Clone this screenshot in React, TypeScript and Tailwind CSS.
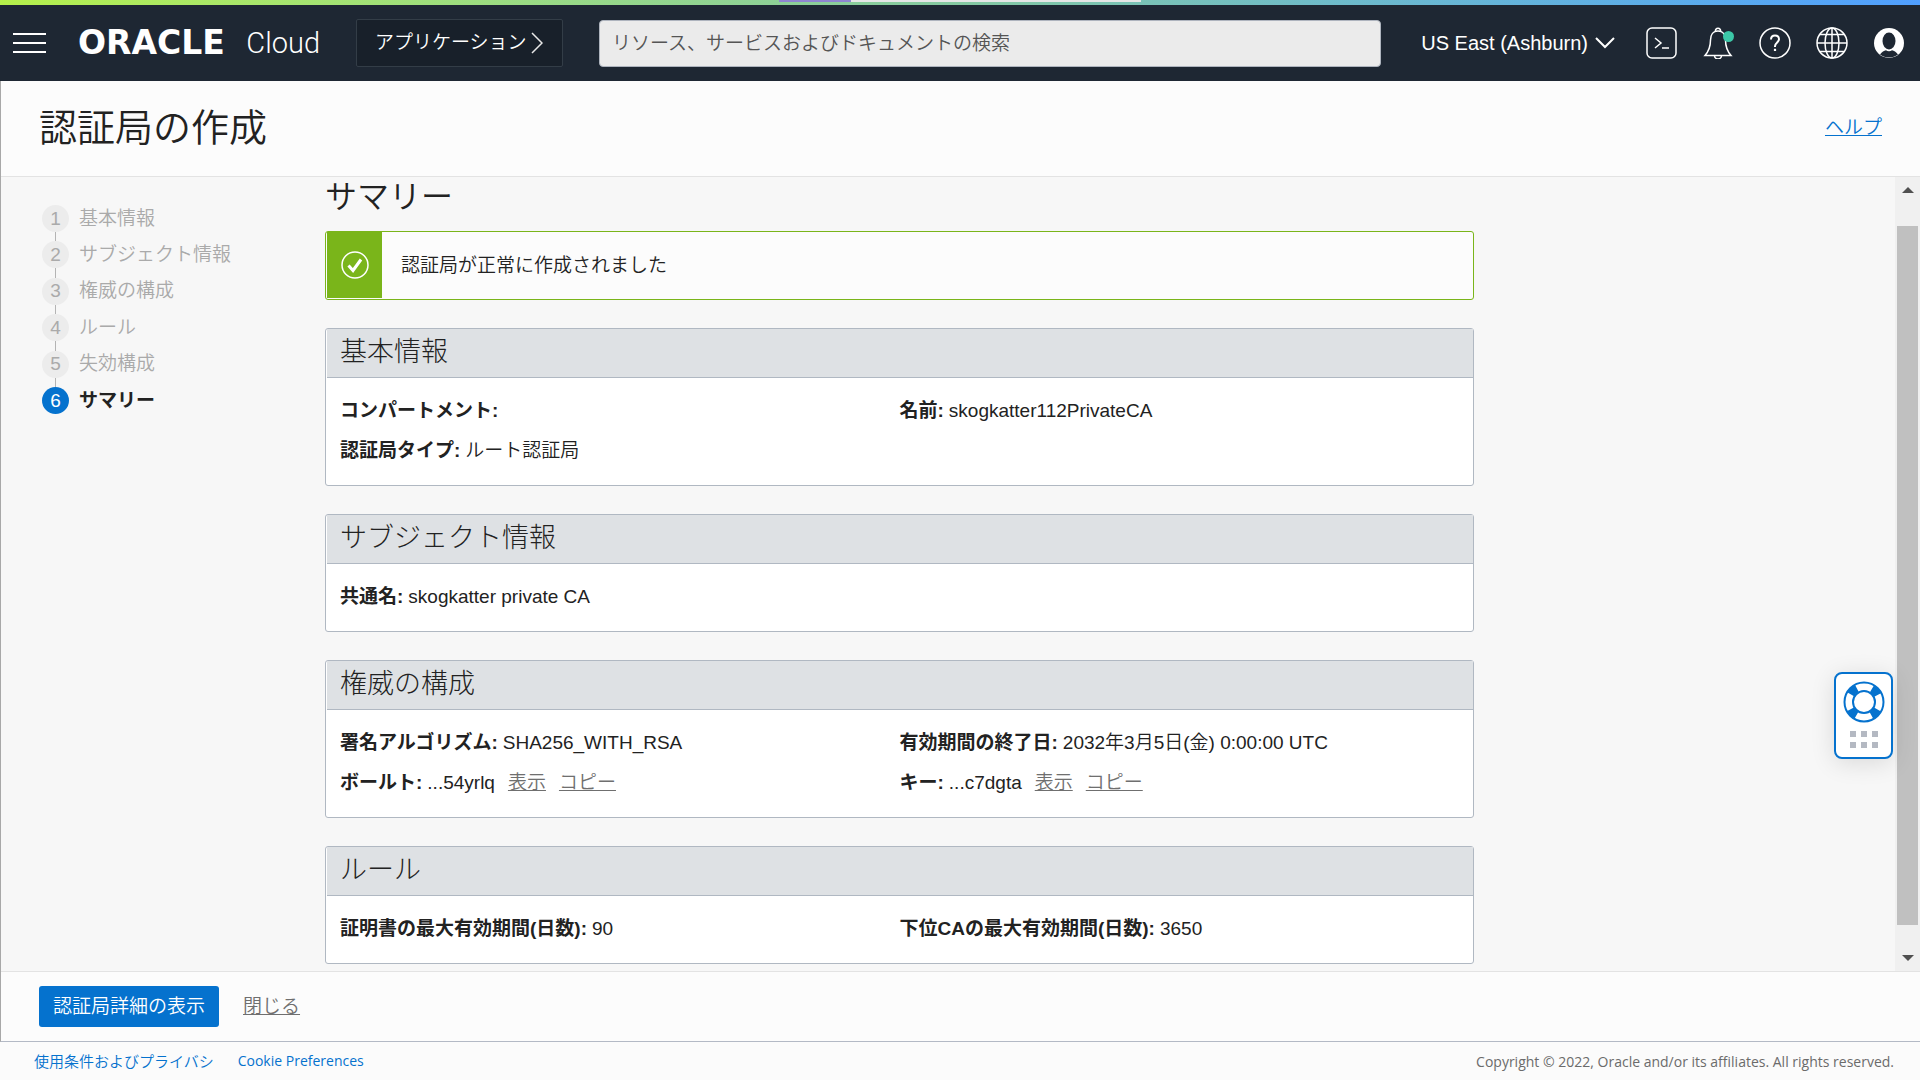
import { ReactNode } from 'react';

interface Field {
  label: string;
  value?: string;
  actions?: boolean;
}

interface Section {
  title: string;
  fields: Field[];
}

const steps = ['基本情報', 'サブジェクト情報', '権威の構成', 'ルール', '失効構成', 'サマリー'];
const currentStep = 5;

const sections: Section[] = [
  {
    title: '基本情報',
    fields: [
      { label: 'コンパートメント' },
      { label: '名前', value: 'skogkatter112PrivateCA' },
      { label: '認証局タイプ', value: 'ルート認証局' },
    ],
  },
  {
    title: 'サブジェクト情報',
    fields: [{ label: '共通名', value: 'skogkatter private CA' }],
  },
  {
    title: '権威の構成',
    fields: [
      { label: '署名アルゴリズム', value: 'SHA256_WITH_RSA' },
      { label: '有効期間の終了日', value: '2032年3月5日(金) 0:00:00 UTC' },
      { label: 'ボールト', value: '...54yrlq', actions: true },
      { label: 'キー', value: '...c7dgta', actions: true },
    ],
  },
  {
    title: 'ルール',
    fields: [
      { label: '証明書の最大有効期間(日数)', value: '90' },
      { label: '下位CAの最大有効期間(日数)', value: '3650' },
    ],
  },
];

function IconButton({ label, children }: { label: string; children: ReactNode }) {
  return (
    <button type="button" aria-label={label} className="size-8 shrink-0">
      <svg viewBox="0 0 32 32" className="size-8" fill="none" stroke="#fff" strokeWidth="1.5">
        {children}
      </svg>
    </button>
  );
}

function Header() {
  return (
    <header className="flex h-[76px] items-center bg-[#1e2733] pr-[15px] pl-[13px] text-white">
      <button type="button" aria-label="メニュー" className="flex w-[33px] shrink-0 flex-col gap-[7px]">
        <span className="h-0.5 bg-white" />
        <span className="h-0.5 bg-white" />
        <span className="h-0.5 bg-white" />
      </button>

      <a href="#" className="ml-8 flex w-[246px] shrink-0 items-center justify-between pr-1 leading-8">
        <span className="font-['DejaVu_Sans'] text-[33px] font-bold">ORACLE</span>
        <span className="font-[Roboto] text-[29px] font-light">Cloud</span>
      </a>

      <button
        type="button"
        className="ml-8 flex h-12 w-[207px] shrink-0 items-center gap-1 rounded-xs border border-[#333d47] bg-[#18202a] pl-[18px] text-[19px] font-[350]"
      >
        アプリケーション
        <svg viewBox="0 0 12 22" className="h-[22px] w-3" fill="none" stroke="#e8e8e8" strokeWidth="1.5">
          <path d="M1 1l10 10L1 21" />
        </svg>
      </button>

      <input
        type="search"
        aria-label="検索"
        placeholder="リソース、サービスおよびドキュメントの検索"
        className="ml-9 h-[47px] min-w-0 flex-1 rounded-sm border border-[#aeb4be] bg-[#ebebeb] px-3 pt-0.5 text-[19px] font-[350] text-[#333] placeholder:text-[#555]"
      />

      <button type="button" className="ml-10 flex shrink-0 items-center gap-[7px] text-xl">
        US East (Ashburn)
        <svg viewBox="0 0 20 12" className="h-3 w-5" fill="none" stroke="#fff" strokeWidth="2">
          <path d="M1 1l9 9 9-9" />
        </svg>
      </button>

      <div className="ml-[30px] flex shrink-0 items-center gap-[25px]">
        <IconButton label="Cloud Shell">
          <rect x="2" y="1" width="29" height="30" rx="5" />
          <path d="M10 11l6 5-6 5M17 21h7" />
        </IconButton>
        <div className="relative size-8">
          <IconButton label="お知らせ">
            <path d="M13.500 4.500a2.600 2.600 0 1 1 5 0M16 4c-5 0-7.500 4-7.500 9 0 7-2 11.500-5.500 15.500h26c-3.500-4-5.500-8.500-5.500-15.500C23.500 8 21 4 16 4zM12.500 28.500a3.500 3.500 0 0 0 7 0" />
          </IconButton>
          <span className="absolute top-1 right-0 size-[11px] rounded-full bg-[#3cc8a8]" />
        </div>
        <IconButton label="ヘルプ">
          <circle cx="16" cy="16" r="15" />
          <path strokeWidth="2" d="M12 12.500c0-2.600 1.700-4 4-4s4 1.500 4 3.800c0 3-4 3.400-4 7v.7" />
          <path strokeWidth="2.200" d="M16 21.800v2.200" />
        </IconButton>
        <IconButton label="言語">
          <circle cx="16" cy="16" r="15" />
          <ellipse cx="16" cy="16" rx="7" ry="15" />
          <path d="M16 1v30M1 16h30M4 7.500h24M4 24.500h24" />
        </IconButton>
        <IconButton label="プロファイル">
          <circle cx="16" cy="16" r="15" fill="#fff" stroke="none" />
          <ellipse cx="16" cy="14" rx="6.500" ry="8.500" fill="#1e2733" stroke="none" />
          <path
            d="M7 27.500c2-2.600 4-3.600 6-4.200 1.600 1.200 4.400 1.200 6 0 2 .6 4 1.600 6 4.200-5 4-13 4-18 0z"
            fill="#1e2733"
            stroke="none"
          />
        </IconButton>
      </div>
    </header>
  );
}

function StepList() {
  return (
    <ol className="mt-7 ml-[41px] flex h-[209px] w-[283px] shrink-0 flex-col">
      {steps.map((step, index) => {
        const active = index === currentStep;
        return (
          <li key={step} className={active ? 'flex flex-col' : 'flex flex-1 flex-col'}>
            <div className="flex h-[27px] items-center gap-2.5">
              <span
                className={
                  active
                    ? 'flex size-[27px] items-center justify-center rounded-full bg-[#0572ce] text-white'
                    : 'flex size-[27px] items-center justify-center rounded-full bg-[#ececec] text-[#aaa]'
                }
              >
                {index + 1}
              </span>
              <span className={active ? 'font-bold text-[#222]' : 'font-[350] text-[#aaa]'}>{step}</span>
            </div>
            {!active && <span className="ml-[13px] w-px flex-1 bg-[#b4b4b4]" />}
          </li>
        );
      })}
    </ol>
  );
}

function FieldRow({ field }: { field: Field }) {
  return (
    <div className="flex h-10 items-center">
      <dt className="font-bold">{field.label}:</dt>
      <dd className="ml-[5px] flex gap-[13px] font-[350]">
        {field.value}
        {field.actions && (
          <>
            <a href="#" className="text-[#6f6f6f] underline">
              表示
            </a>
            <a href="#" className="text-[#6f6f6f] underline">
              コピー
            </a>
          </>
        )}
      </dd>
    </div>
  );
}

function Panel({ section }: { section: Section }) {
  return (
    <section className="rounded-[3px] border border-[#b0b8c2] bg-white">
      <h3 className="ml-px h-[49px] border-b border-[#b0b8c2] bg-[#dee1e4] pl-[13px] text-[27px] leading-[46px] font-light">
        {section.title}
      </h3>
      <dl className="grid grid-cols-2 px-3.5 pt-[13px] pb-3.5">
        {section.fields.map((field) => (
          <FieldRow key={field.label} field={field} />
        ))}
      </dl>
    </section>
  );
}

function ScrollBar() {
  return (
    <div aria-hidden="true" className="flex w-[25px] shrink-0 flex-col items-center bg-[#f0f0f0]">
      <svg viewBox="0 0 12 6" className="mt-2.5 h-1.5 w-3" fill="#505050">
        <path d="M0 6l6-6 6 6z" />
      </svg>
      <div className="mt-[33px] mb-[30px] w-[21px] flex-1 bg-[#c0c0c0]" />
      <svg viewBox="0 0 12 6" className="mb-2.5 h-1.5 w-3" fill="#505050">
        <path d="M0 0l6 6 6-6z" />
      </svg>
    </div>
  );
}

function SupportWidget() {
  return (
    <button
      type="button"
      aria-label="サポート"
      className="fixed top-[672px] right-[27px] flex h-[87px] w-[59px] flex-col items-center rounded-lg border-2 border-[#0572ce] bg-white pt-[7px] shadow-[0_4px_24px_rgba(0,0,0,0.12)]"
    >
      <svg viewBox="0 0 42 42" className="size-[42px]" fill="none" stroke="#0572ce">
        <circle
          cx="21"
          cy="21"
          r="15.500"
          strokeWidth="8"
          strokeDasharray="8.500 15.847"
          strokeDashoffset="-7.900"
        />
        <circle cx="21" cy="21" r="19.500" strokeWidth="2" />
        <circle cx="21" cy="21" r="11" strokeWidth="2" />
      </svg>
      <span className="mt-2 grid grid-cols-3 gap-[5px]">
        {[0, 1, 2, 3, 4, 5].map((dot) => (
          <span key={dot} className="size-1.5 bg-[#b4b9c2]" />
        ))}
      </span>
    </button>
  );
}

export default function App() {
  return (
    <div className="flex min-h-screen flex-col bg-[#fbfbfb] font-['Liberation_Sans','Noto_Sans_CJK_JP',sans-serif] text-[19px] leading-7 text-[#222]">
      <div className="relative h-[5px] bg-linear-to-r from-[#b5f04a] via-[#85c9a2] to-[#509fff]">
        <div className="absolute top-0 left-[779px] flex h-0.5">
          <span className="w-[72px] bg-[#8f86d0]" />
          <span className="w-[290px] bg-[#e6e6e6]" />
        </div>
      </div>
      <Header />

      <div className="flex flex-1 flex-col border-b border-l border-b-[#b3b9c5] border-l-[#a8a8a8] bg-[#fcfcfc]">
        <div className="flex h-24 items-center justify-between border-b border-[#e3e3e3] pr-[38px] pb-0.5 pl-[38px]">
          <h1 className="text-[38px] leading-none font-[350]">認証局の作成</h1>
          <a href="#" className="font-[350] text-[#0572ce] underline">
            ヘルプ
          </a>
        </div>

        <div className="flex flex-1 bg-[#f7f7f7]">
          <StepList />
          <main className="flex flex-1 flex-col">
            <div className="max-w-[1149px]">
              <h2 className="h-[54px] text-[32px] leading-[40px] font-[350]">サマリー</h2>
              <div role="status" className="flex h-[69px] rounded-[3px] border border-[#7ab51a] bg-[#fcfcfc]">
                <div className="mb-px ml-px flex w-[55px] items-center justify-center bg-[#7ab51a]">
                  <svg viewBox="0 0 28 28" className="size-7" fill="none" stroke="#fff">
                    <circle cx="14" cy="14" r="13" strokeWidth="1.500" />
                    <path d="M7.500 14.500l4.500 5 8-11" strokeWidth="3" />
                  </svg>
                </div>
                <p className="self-center pl-[19px] font-[350]">認証局が正常に作成されました</p>
              </div>
              <div className="mt-7 mb-[7px] flex flex-col gap-7">
                {sections.map((section) => (
                  <Panel key={section.title} section={section} />
                ))}
              </div>
            </div>
          </main>
          <ScrollBar />
        </div>

        <div className="flex h-[70px] items-center gap-6 border-t border-[#e3e3e3] pl-[38px] font-[350]">
          <button type="button" className="h-[41px] rounded-[3px] bg-[#0572ce] px-3.5 text-white">
            認証局詳細の表示
          </button>
          <a href="#" className="text-[#6f6f6f] underline">
            閉じる
          </a>
        </div>
      </div>

      <footer className="flex h-[39px] items-center justify-between pr-[26px] pl-[34px] font-['Open_Sans','Noto_Sans_CJK_JP',sans-serif] text-sm">
        <nav className="flex gap-6 text-[#0572ce]">
          <a href="#" className="text-[15px] font-[350]">
            使用条件およびプライバシ
          </a>
          <a href="#">Cookie Preferences</a>
        </nav>
        <p className="text-[#6b6b6b]">Copyright © 2022, Oracle and/or its affiliates. All rights reserved.</p>
      </footer>

      <SupportWidget />
    </div>
  );
}
